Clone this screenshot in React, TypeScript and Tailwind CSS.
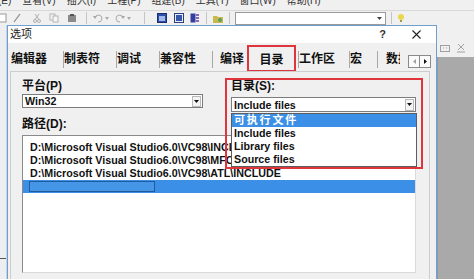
import type { ReactNode } from 'react';

const menus = ['编辑(E)', '查看(V)', '插入(I)', '工程(P)', '组建(B)', '工具(T)', '窗口(W)', '帮助(H)'];

const tabs = [
  { label: '编辑器', cls: 'w-[53px] justify-center' },
  { label: '制表符', cls: 'w-[53px] justify-center' },
  { label: '调试', cls: 'w-[43px] justify-center' },
  { label: '兼容性', cls: 'w-[53px] justify-center' },
  { label: '编译', cls: 'w-[34px] pl-[7px]' },
];

const tabsAfter = [
  { label: '工作区', cls: 'w-[51px] justify-center' },
  { label: '宏', cls: 'w-[28px] justify-center' },
];

const paths = [
  'D:\\Microsoft Visual Studio6.0\\VC98\\INCLUDE',
  'D:\\Microsoft Visual Studio6.0\\VC98\\MFC\\INCLUDE',
  'D:\\Microsoft Visual Studio6.0\\VC98\\ATL\\INCLUDE',
];

const dirs = ['Include files', 'Library files', 'Source files'];

function Ico({ children, cls }: { children: ReactNode; cls: string }) {
  return (
    <svg className={cls} width="10" height="10" viewBox="0 0 10 10">
      {children}
    </svg>
  );
}

function Sep({ cls }: { cls: string }) {
  return <div className={'h-[12px] w-px bg-[#c4c4c4] ' + cls} />;
}

function ComboArrow({ tall }: { tall?: boolean }) {
  return (
    <div className={'ml-auto mr-px flex w-[9px] items-center justify-center border border-[#b9b9b9] bg-[#f4f4f4] ' + (tall ? 'h-[12px]' : 'h-[11px]')}>
      <svg width="5" height="3" viewBox="0 0 5 3">
        <path d="M0 0h5L2.5 3z" fill="#111" />
      </svg>
    </div>
  );
}

function Toolbar() {
  return (
    <div className="flex h-[15px] items-center border-t border-[#d9d9d9]">
      <Ico cls="-ml-[2px]">
        <rect x="1" y="1" width="7" height="8" fill="#fff" stroke="#9a9a9a" />
      </Ico>
      <Ico cls="ml-[4px]">
        <path d="M2 9L8 1" stroke="#8a8a8a" strokeWidth="1.2" />
      </Ico>
      <Ico cls="ml-[10px]">
        <circle cx="3" cy="8" r="1.5" fill="none" stroke="#b0b0b0" />
        <circle cx="7" cy="8" r="1.5" fill="none" stroke="#b0b0b0" />
        <path d="M3 6.5L7 1M7 6.5L3 1" stroke="#b0b0b0" />
      </Ico>
      <Ico cls="ml-[7px]">
        <rect x="1" y="1" width="5" height="6" fill="#f6f6f6" stroke="#b4b4b4" />
        <rect x="4" y="3" width="5" height="6" fill="#f6f6f6" stroke="#b4b4b4" />
      </Ico>
      <Ico cls="ml-[8px]">
        <rect x="1" y="2" width="8" height="7" fill="#8a8a8a" />
        <rect x="3" y="1" width="4" height="2" fill="#555" />
      </Ico>
      <Sep cls="ml-[9px]" />
      <Ico cls="ml-[6px]">
        <path d="M2 5a3.5 3.5 0 1 1 3 4" fill="none" stroke="#a8a8a8" />
        <path d="M0 3l2 3 2-3z" fill="#a8a8a8" />
      </Ico>
      <svg className="ml-[2px]" width="4" height="3" viewBox="0 0 4 3"><path d="M0 0h4L2 3z" fill="#aaa" /></svg>
      <Ico cls="ml-[6px]">
        <path d="M8 5a3.5 3.5 0 1 0 -3 4" fill="none" stroke="#a8a8a8" />
        <path d="M6 3l2 3 2-3z" fill="#a8a8a8" />
      </Ico>
      <svg className="ml-[2px]" width="4" height="3" viewBox="0 0 4 3"><path d="M0 0h4L2 3z" fill="#aaa" /></svg>
      <Sep cls="ml-[13px]" />
      <Ico cls="ml-[12px]">
        <rect x="0.5" y="0.5" width="9" height="9" fill="#2d4fa8" stroke="#1b2f70" />
        <rect x="2" y="3" width="6" height="5" fill="#9fb8e8" />
      </Ico>
      <Ico cls="ml-[7px]">
        <rect x="0.5" y="0.5" width="9" height="9" fill="#e8eefa" stroke="#2d3f7a" />
        <rect x="2" y="2" width="6" height="6" fill="#3656a8" />
      </Ico>
      <Ico cls="ml-[6px]">
        <rect x="0.5" y="0.5" width="5" height="9" fill="#3140a0" />
        <path d="M6 2h3M6 5h3M6 8h3" stroke="#6a3aa8" strokeWidth="1.4" />
      </Ico>
      <Sep cls="ml-[6px]" />
      <Ico cls="ml-[6px]">
        <path d="M0 3h4l1 1h5v6H0z" fill="#c8b850" />
        <circle cx="7" cy="7" r="2" fill="#5aa05a" />
      </Ico>
      <Sep cls="ml-[6px]" />
      <div className="ml-[5px] flex h-[13px] w-[151px] items-center border border-[#9a9a9a] bg-white">
        <svg className="ml-auto mr-[3px]" width="5" height="3" viewBox="0 0 5 3"><path d="M0 0h5L2.5 3z" fill="#444" /></svg>
      </div>
      <Sep cls="ml-[5px]" />
      <Ico cls="ml-[4px]">
        <circle cx="5" cy="4" r="3" fill="#e8d84a" />
        <rect x="4" y="7" width="2" height="2" fill="#9a9a50" />
      </Ico>
    </div>
  );
}

function TabRow() {
  return (
    <div className="flex h-[28px] shrink-0 pl-[3px] text-[12px] font-bold leading-[12px]">
      {tabs.map((t, i) => (
        <div key={t.label} className={'flex h-full items-center overflow-hidden pt-[4px] ' + t.cls}>
          <span className="whitespace-nowrap">{t.label}</span>
          {i < tabs.length - 1 && <div className="ml-auto h-[17px] w-px shrink-0 bg-[#a8a8a8]" />}
        </div>
      ))}
      <div className="mt-[2px] flex h-[27px] w-[49px] items-center justify-center border-2 border-[#e0353d] pt-[2px]">
        目录
      </div>
      <div className="ml-[2px] flex h-full items-center pt-[4px]">
        <div className="h-[17px] w-px bg-[#a8a8a8]" />
      </div>
      {tabsAfter.map((t) => (
        <div key={t.label} className={'flex h-full items-center pt-[4px] ' + t.cls}>
          <span className="whitespace-nowrap">{t.label}</span>
          <div className="ml-auto h-[17px] w-px shrink-0 bg-[#a8a8a8]" />
        </div>
      ))}
      <div className="flex h-full w-[22px] items-center overflow-hidden pl-[8px] pt-[4px]">
        <span className="whitespace-nowrap">数据</span>
      </div>
      <div className="mb-[3px] ml-[8px] flex h-[13px] w-[23px] self-end border border-[#8a8a8a] bg-[#fafafa]">
        <div className="flex flex-1 items-center justify-center border-r border-[#8a8a8a]">
          <svg width="3" height="5" viewBox="0 0 3 5"><path d="M3 0v5L0 2.5z" fill="#a0a0a0" /></svg>
        </div>
        <div className="flex flex-1 items-center justify-center">
          <svg width="3" height="5" viewBox="0 0 3 5"><path d="M0 0v5L3 2.5z" fill="#111" /></svg>
        </div>
      </div>
    </div>
  );
}

function Dialog() {
  return (
    <div className="relative flex h-[262px] w-[430px] shrink-0 flex-col border border-[#6f9fcf] bg-[#f0f0f0]">
      <div className="flex h-[17px] shrink-0 items-center bg-white">
        <span className="pl-[2px] text-[11px] leading-none text-[#222]">选项</span>
        <span className="ml-auto text-[11px] font-bold leading-none text-[#333]">?</span>
        <svg className="ml-[26px] mr-[15px]" width="9" height="9" viewBox="0 0 9 9">
          <path d="M0.5 0.5l8 8M8.5 0.5l-8 8" stroke="#222" strokeWidth="1.1" />
        </svg>
      </div>
      <TabRow />
      <div className="ml-[2px] flex w-[420px] flex-1 flex-col border-l border-r border-t border-[#cdcdcd] pl-[11px] pr-[13px] pt-[8px] text-[12px] leading-[12px]">
        <div className="flex">
          <div className="w-[181px]">
            <div className="h-[12px] font-bold">平台(P)</div>
            <div className="mt-[2px] flex h-[14px] items-center border border-[#7c7c7c] bg-white pl-[2px] text-[10.7px] font-bold">
              Win32
              <ComboArrow />
            </div>
          </div>
          <div className="ml-[28px] w-[185px]">
            <div className="h-[12px] font-bold">目录(S):</div>
            <div className="mt-[5px] flex h-[15px] items-center border border-[#7c7c7c] bg-white pl-[2px] text-[10.7px] font-bold">
              Include files
              <ComboArrow tall />
            </div>
          </div>
        </div>
        <div className="mt-[6px] h-[12px] font-bold">路径(D):</div>
        <div className="mt-[5px] h-[138px] border border-b-[#dadada] border-l-[#8a8a8a] border-r-[#dadada] border-t-[#8a8a8a] bg-white pt-[5px] text-[10.7px] font-bold leading-[13px]">
          {paths.map((p) => (
            <div key={p} className="h-[13px] whitespace-nowrap pl-[7px]">
              {p}
            </div>
          ))}
          <div className="flex h-[13px] items-center bg-[#3b8fe6] pl-[6px]">
            <div className="h-[11px] w-[126px] border border-[#1f5a9c] bg-[#4696e8]" />
          </div>
        </div>
      </div>

      {/* open dropdown of the 目录 combo */}
      <div className="absolute left-[223px] top-[87px] w-[186px] border border-[#5c5c5c] bg-white text-[10.7px] font-bold leading-[13px]">
        <div className="h-[13px] bg-[#3b8fe6] pl-[2px] text-[11px] tracking-[1.8px] text-white">可执行文件</div>
        {dirs.map((d) => (
          <div key={d} className="h-[13px] pl-[2px]">
            {d}
          </div>
        ))}
      </div>
      {/* red annotation box */}
      <div className="absolute left-[217px] top-[52px] h-[91px] w-[198px] border-2 border-[#e0353d]" />
    </div>
  );
}

function RightArea() {
  return (
    <div className="flex flex-1 flex-col">
      <div className="flex h-[32px] shrink-0 items-start gap-[6px] pl-[3px] pt-[18px]">
        <Ico cls="">
          <rect x="0.5" y="2.5" width="9" height="6" fill="none" stroke="#a0a0a0" />
          <path d="M3 5h1M6 5h1" stroke="#a0a0a0" />
        </Ico>
        <Ico cls="">
          <path d="M1 9h8M2 7L8 1M2 1l6 6" stroke="#a0a0a0" />
        </Ico>
      </div>
      <div className="flex-1 border-l border-[#8a9ab0] bg-[#a9a9a9]" />
    </div>
  );
}

export default function App() {
  return (
    <div className="flex h-[279px] w-[474px] flex-col overflow-hidden bg-[#f0f0f0] font-['Liberation_Sans','Noto_Sans_CJK_SC',sans-serif] text-[#111]">
      <div className="h-[10px] shrink-0 overflow-hidden">
        <div className="-ml-[22px] -mt-[6px] flex gap-[11px] whitespace-nowrap text-[10px] leading-[14px] text-[#333]">
          {menus.map((m) => (
            <span key={m}>{m}</span>
          ))}
        </div>
      </div>
      <Toolbar />
      <div className="flex min-h-0 flex-1">
        <div className="flex w-[7px] shrink-0 flex-col border-r border-[#c5d3e2] bg-[#eceef1]">
          <div className="h-[233px]" />
          <div className="h-px w-[6px] bg-[#555]" />
        </div>
        <Dialog />
        <RightArea />
      </div>
    </div>
  );
}
